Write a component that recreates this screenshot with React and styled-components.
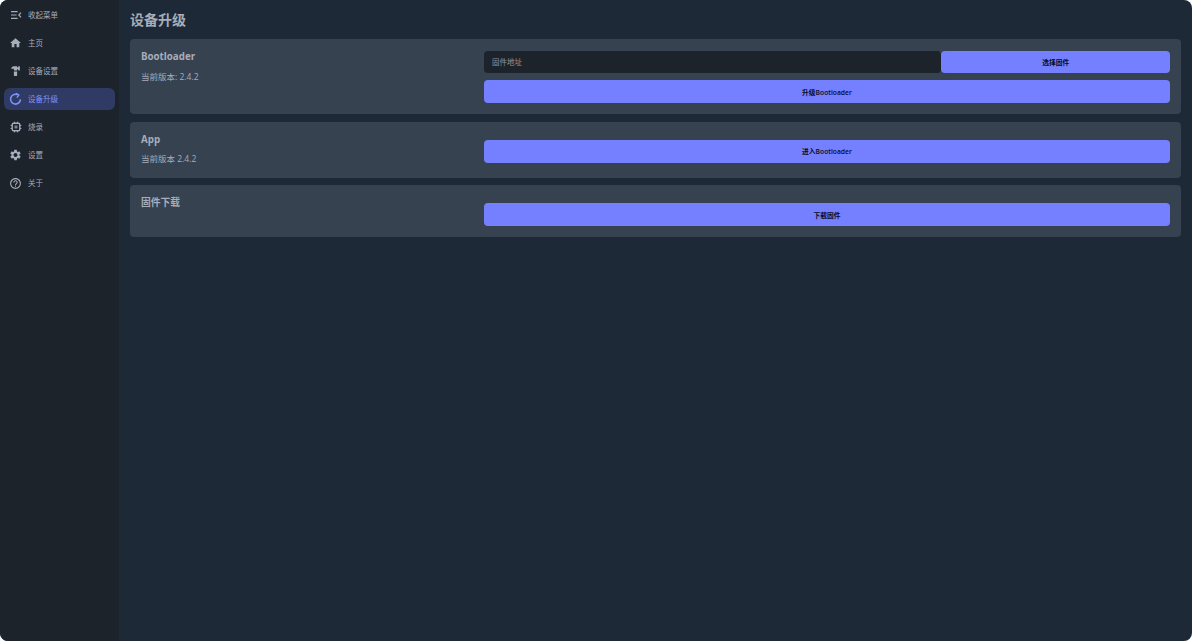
import React from "react";
import styled, { createGlobalStyle } from "styled-components";
import { MdHome, MdHardware, MdSettings, MdHelpOutline } from "react-icons/md";

const GlobalStyle = createGlobalStyle`
  html, body {
    margin: 0;
    padding: 0;
    background: #ffffff;
  }
  body {
    font-family: "Open Sans", "Noto Sans CJK SC", sans-serif;
  }
`;

const CollapseIcon = () => (
  <svg width="12" height="12" viewBox="0 0 12 12" fill="none" stroke="currentColor" strokeWidth="1.2">
    <path d="M1 2.6h6.6M1 6h5.6M1 9.4h6.6" />
    <path d="M11 3.6 8.8 6 11 8.4" />
  </svg>
);

const UpgradeIcon = () => (
  <svg width="14" height="14" viewBox="0 0 14 14" fill="none" stroke="#7f93ff" strokeWidth="1.7">
    <path d="M12.3 7.4A5.3 5.3 0 1 1 8.8 2.2" />
    <path d="M7.4 0.9 10.6 2.7 8.5 5.6" strokeWidth="1.5" />
  </svg>
);

const BurnIcon = () => (
  <svg width="12" height="12" viewBox="0 0 12 12" fill="none" stroke="currentColor">
    <rect x="2.2" y="2.2" width="7.6" height="7.6" rx="1.6" strokeWidth="1.4" />
    <path d="M4.5.6v1.4M7.5.6v1.4M4.5 10v1.4M7.5 10v1.4M.6 4.5h1.4M.6 7.5h1.4M10 4.5h1.4M10 7.5h1.4" strokeWidth="0.9" />
    <rect x="4.5" y="4.5" width="3" height="3" rx="0.4" fill="currentColor" stroke="none" opacity="0.7" />
  </svg>
);

const navItems = [
  { label: "收起菜单", icon: <CollapseIcon /> },
  { label: "主页", icon: <MdHome size={14} /> },
  { label: "设备设置", icon: <MdHardware size={14} /> },
  { label: "设备升级", icon: <UpgradeIcon />, active: true },
  { label: "烧录", icon: <BurnIcon /> },
  { label: "设置", icon: <MdSettings size={14} /> },
  { label: "关于", icon: <MdHelpOutline size={13} /> },
];

function App() {
  return (
    <Shell>
      <GlobalStyle />
      <Sidebar>
        {navItems.map((item) => (
          <NavItem key={item.label} $active={item.active}>
            <NavIcon>{item.icon}</NavIcon>
            <NavLabel>{item.label}</NavLabel>
          </NavItem>
        ))}
      </Sidebar>
      <Main>
        <Title>设备升级</Title>
        <Card>
          <Info>
            <CardTitle>Bootloader</CardTitle>
            <Version>当前版本: 2.4.2</Version>
          </Info>
          <Actions>
            <Join>
              <FirmwareInput placeholder="固件地址" readOnly />
              <JoinButton>选择固件</JoinButton>
            </Join>
            <Button>升级Bootloader</Button>
          </Actions>
        </Card>
        <Card>
          <Info>
            <CardTitle>App</CardTitle>
            <Version>当前版本 2.4.2</Version>
          </Info>
          <Actions $inset>
            <Button>进入Bootloader</Button>
          </Actions>
        </Card>
        <Card>
          <Info>
            <CardTitle>固件下载</CardTitle>
          </Info>
          <Actions $inset>
            <Button>下载固件</Button>
          </Actions>
        </Card>
      </Main>
    </Shell>
  );
}

const Shell = styled.div`
  display: flex;
  height: 100vh;
  border-radius: 8px;
  overflow: hidden;
  background: #1d2937;
`;

const Sidebar = styled.nav`
  width: 119px;
  flex-shrink: 0;
  box-sizing: border-box;
  padding: 4px;
  display: flex;
  flex-direction: column;
  gap: 6px;
  background: #1d232a;
`;

const NavItem = styled.div`
  height: 22px;
  display: flex;
  align-items: center;
  gap: 6px;
  padding-left: 5px;
  border-radius: 6px;
  font-size: 7.5px;
  color: ${(p) => (p.$active ? "#7f93ff" : "#a6adbb")};
  background: ${(p) => (p.$active ? "#2f3b64" : "transparent")};
`;

const NavIcon = styled.span`
  width: 13px;
  height: 14px;
  display: flex;
  align-items: center;
  justify-content: center;
`;

const NavLabel = styled.span`
  padding-bottom: 1px;
`;

const Main = styled.main`
  flex: 1;
  min-width: 0;
  box-sizing: border-box;
  padding: 0 11px;
  display: flex;
  flex-direction: column;
  gap: 7.5px;
`;

const Title = styled.h1`
  margin: 0 0 1.5px;
  height: 30px;
  display: flex;
  align-items: flex-end;
  font-size: 14px;
  line-height: 20px;
  font-weight: 700;
  color: #a6adbb;
`;

const Card = styled.section`
  display: grid;
  grid-template-columns: 1fr 2fr;
  padding: 12px 11px 11px;
  border-radius: 4px;
  background: #374250;
`;

const Info = styled.div`
  display: flex;
  flex-direction: column;
  gap: 6.5px;
`;

const CardTitle = styled.h2`
  margin: 0;
  font-size: 9.75px;
  line-height: 12px;
  font-weight: 700;
  color: #a6adbb;
`;

const Version = styled.p`
  margin: 0;
  padding-bottom: 1px;
  font-size: 8.5px;
  line-height: 13.5px;
  color: #a6adbb;
`;

const Actions = styled.div`
  display: flex;
  flex-direction: column;
  gap: 7px;
  padding-top: ${(p) => (p.$inset ? "6px" : "0")};
`;

const Join = styled.div`
  display: flex;
  height: 22px;
`;

const FirmwareInput = styled.input`
  flex: 0 0 66.67%;
  min-width: 0;
  box-sizing: border-box;
  padding: 0 8px;
  border: none;
  outline: none;
  border-radius: 4px;
  background: #1d232a;
  font-family: inherit;
  font-size: 7.5px;
  color: #a6adbb;
  &::placeholder {
    color: #8f96a3;
  }
`;

const Button = styled.button`
  height: 23px;
  box-sizing: border-box;
  padding: 0;
  border: none;
  border-radius: 4px;
  background: #7480ff;
  font-family: inherit;
  font-size: 6.75px;
  font-weight: 600;
  color: #080b24;
`;

const JoinButton = styled(Button)`
  flex: 1 1 0;
  height: 22px;
`;

export default App;
